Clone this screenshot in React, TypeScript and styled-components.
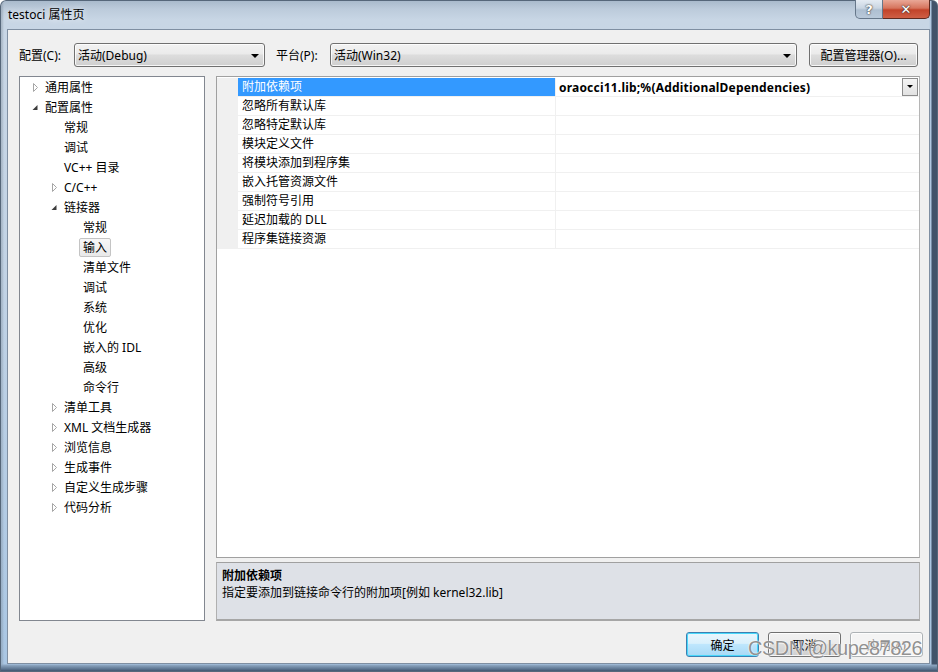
import React from "react";
import styled, { createGlobalStyle } from "styled-components";

const GlobalStyle = createGlobalStyle`
  html, body {
    margin: 0;
    padding: 0;
    background: #ffffff;
  }
  body {
    font-family: "Noto Sans", "Noto Sans CJK SC", sans-serif;
    font-size: 12px;
    color: #000;
  }
`;

const Window = styled.div`
  position: relative;
  width: 938px;
  height: 672px;
  box-sizing: border-box;
  padding: 0 8px 8px 7px;
  display: flex;
  flex-direction: column;
  border-radius: 6px 6px 0 0;
  overflow: hidden;
  box-shadow: inset 0 0 0 1px #56677a;
  background:
    linear-gradient(0deg, #33465e 0px, #5d7591 3px, #8ea7c2 7px, transparent 8px),
    linear-gradient(90deg, rgba(120, 135, 150, 0.35) 2px, transparent 4px),
    linear-gradient(270deg, #41536a 6px, #a9c3de 7px, transparent 9px),
    linear-gradient(180deg, #a7b8ca 0px, #bccbdb 9px, #c8d6e5 20px, #c2d3e5 40%, #a9c6e3 100%);
`;

const TitleBar = styled.div`
  height: 29px;
  flex: none;
  display: flex;
  justify-content: space-between;
  align-items: flex-start;
`;

const Title = styled.div`
  padding: 7px 0 0 1px;
  line-height: 16px;
  color: #000;
  text-shadow: 0 0 6px rgba(255, 255, 255, 0.9);
`;

const CaptionButtons = styled.div`
  display: flex;
`;

const CaptionButton = styled.div<{ close?: boolean }>`
  width: ${(p) => (p.close ? 47 : 28)}px;
  height: 19px;
  box-sizing: border-box;
  display: flex;
  align-items: center;
  justify-content: center;
  font-family: "DejaVu Sans", sans-serif;
  font-weight: bold;
  font-size: 13px;
  color: #fff;
  border: 1px solid ${(p) => (p.close ? "#5f2a20" : "#66778a")};
  border-top: none;
  border-left: ${(p) => (p.close ? "none" : undefined)};
  border-radius: ${(p) => (p.close ? "0 0 5px 0" : "0 0 0 5px")};
  text-shadow: 0 0 1px #333, 0 0 2px #333;
  background: ${(p) =>
    p.close
      ? "linear-gradient(180deg, #e9a897 0%, #d6745d 45%, #c2432a 55%, #cf5f45 100%)"
      : "linear-gradient(180deg, #e4ebf3 0%, #c9d5e2 45%, #aebfd1 55%, #b9c9da 100%)"};
`;

const Client = styled.div`
  flex: 1;
  display: flex;
  flex-direction: column;
  border: 1px solid #7f8fa2;
  background: #f0f0f0;
  position: relative;
`;

const Toolbar = styled.div`
  margin-top: 13px;
  height: 24px;
  padding-left: 11px;
  display: flex;
  align-items: center;
`;

const Label = styled.span<{ w: number; ml?: number }>`
  width: ${(p) => p.w}px;
  margin-left: ${(p) => p.ml || 0}px;
  flex: none;
  white-space: nowrap;
`;

const buttonFace = `
  background: linear-gradient(180deg, #f2f2f2 0%, #ebebeb 45%, #dddddd 50%, #cfcfcf 100%);
  border: 1px solid #707070;
  border-radius: 3px;
  box-shadow: inset 0 0 0 1px rgba(255, 255, 255, 0.8);
`;

const Combo = styled.div<{ w: number }>`
  ${buttonFace}
  width: ${(p) => p.w}px;
  height: 24px;
  box-sizing: border-box;
  flex: none;
  display: flex;
  align-items: center;
  justify-content: space-between;
  padding: 0 5px 0 3px;
`;

const Arrow = styled.span`
  width: 0;
  height: 0;
  border-left: 4px solid transparent;
  border-right: 4px solid transparent;
  border-top: 4px solid #000;
  margin-top: 2px;
`;

const PushButton = styled.div<{ w: number; ml?: number }>`
  ${buttonFace}
  width: ${(p) => p.w}px;
  margin-left: ${(p) => p.ml || 0}px;
  height: 24px;
  box-sizing: border-box;
  flex: none;
  display: flex;
  align-items: center;
  justify-content: center;
  white-space: nowrap;
`;

const Main = styled.div`
  margin-top: 9px;
  height: 545px;
  padding-left: 11px;
  display: flex;
  gap: 11px;
`;

const TreePanel = styled.div`
  width: 186px;
  box-sizing: border-box;
  border: 1px solid #828790;
  background: #fff;
`;

const TreeRow = styled.div<{ level: number }>`
  height: 20px;
  display: flex;
  align-items: center;
  padding-left: ${(p) => 11 + p.level * 19}px;
`;

const ExpanderBox = styled.span`
  width: 14px;
  height: 20px;
  flex: none;
  display: flex;
  align-items: center;
`;

const TreeLabel = styled.span<{ selected?: boolean }>`
  height: 19px;
  line-height: 17px;
  box-sizing: border-box;
  margin-left: -4px;
  padding: 0 3px;
  white-space: nowrap;
  border: 1px solid ${(p) => (p.selected ? "#c4c4c4" : "transparent")};
  border-radius: 2px;
  background: ${(p) =>
    p.selected ? "linear-gradient(180deg, #f7f7f7 0%, #e9e9e9 100%)" : "transparent"};
`;

const GridColumn = styled.div`
  width: 704px;
  display: flex;
  flex-direction: column;
  gap: 4px;
`;

const Grid = styled.div`
  flex: 1;
  border: 1px solid #a0a0a0;
  border-right-color: #b5b5b5;
  background: #fff;
  padding-top: 1px;
`;

const PropRow = styled.div`
  display: grid;
  grid-template-columns: 21px 318px 1fr;
  height: 19px;
  box-sizing: border-box;
  border-bottom: 1px solid #f0f0f0;
`;

const Gutter = styled.div`
  background: #f0f0f0;
  margin-bottom: -1px;
`;

const NameCell = styled.div<{ selected?: boolean }>`
  padding-left: 4px;
  line-height: 18px;
  white-space: nowrap;
  border-right: 1px solid #f0f0f0;
  background: ${(p) => (p.selected ? "#3399ff" : "transparent")};
  color: ${(p) => (p.selected ? "#fff" : "#000")};
`;

const ValueCell = styled.div`
  padding-left: 3px;
  display: flex;
  align-items: center;
  justify-content: space-between;
  font-weight: bold;
  letter-spacing: 0.2px;
  white-space: nowrap;
`;

const DropButton = styled.span`
  width: 16px;
  height: 18px;
  box-sizing: border-box;
  margin: -1px 1px 0 0;
  border: 1px solid #8c8c8c;
  background: linear-gradient(180deg, #f4f4f4 0%, #e2e2e2 100%);
  display: flex;
  align-items: center;
  justify-content: center;
`;

const SmallArrow = styled.span`
  width: 0;
  height: 0;
  border-left: 3px solid transparent;
  border-right: 3px solid transparent;
  border-top: 3px solid #000;
`;

const Description = styled.div`
  height: 59px;
  box-sizing: border-box;
  border: 1px solid #b0b0b0;
  border-top-color: #a0a0a0;
  border-bottom: 2px solid #a6a6a6;
  background: #dee1e7;
  padding: 4px 0 0 5px;
  line-height: 17px;
`;

const DescTitle = styled.div`
  font-weight: bold;
`;

const ButtonBar = styled.div`
  margin-top: 11px;
  height: 25px;
  padding-right: 6px;
  display: flex;
  justify-content: flex-end;
  gap: 9px;
`;

const DialogButton = styled.div<{ variant?: "default" | "disabled" }>`
  width: 73px;
  height: 25px;
  box-sizing: border-box;
  display: flex;
  align-items: center;
  justify-content: center;
  border-radius: 3px;
  border: 1px solid
    ${(p) =>
      p.variant === "default" ? "#3c7fb1" : p.variant === "disabled" ? "#adb2b5" : "#707070"};
  color: ${(p) => (p.variant === "disabled" ? "#838383" : "#000")};
  box-shadow: inset 0 0 0 1px
    ${(p) => (p.variant === "default" ? "#48d8fb" : "rgba(255,255,255,0.8)")};
  background: ${(p) =>
    p.variant === "default"
      ? "linear-gradient(180deg, #eaf6fd 0%, #d9f0fc 45%, #bee6fd 50%, #a7d9f5 100%)"
      : p.variant === "disabled"
      ? "#f4f4f4"
      : "linear-gradient(180deg, #f2f2f2 0%, #ebebeb 45%, #dddddd 50%, #cfcfcf 100%)"};
`;

const Watermark = styled.div`
  position: absolute;
  left: 748px;
  top: 637px;
  font-family: "Liberation Sans", Arial, sans-serif;
  font-size: 20px;
  letter-spacing: -0.5px;
  color: rgba(115, 115, 115, 0.8);
  text-shadow: 0 0 1px #fff, 0 0 2px rgba(255, 255, 255, 0.9);
  pointer-events: none;
  white-space: nowrap;
`;

function Expander({ state }: { state?: "open" | "closed" }) {
  if (!state) return <ExpanderBox />;
  return (
    <ExpanderBox>
      <svg width="9" height="9" viewBox="0 0 9 9">
        {state === "closed" ? (
          <path d="M2.5 0.5 L6.5 4.5 L2.5 8.5 Z" fill="#fff" stroke="#a6a6a6" />
        ) : (
          <path d="M6.5 2 L6.5 7 L1.5 7 Z" fill="#3c3c3c" />
        )}
      </svg>
    </ExpanderBox>
  );
}

type TreeItem = {
  label: string;
  level: number;
  state?: "open" | "closed";
  selected?: boolean;
};

const treeItems: TreeItem[] = [
  { label: "通用属性", level: 0, state: "closed" },
  { label: "配置属性", level: 0, state: "open" },
  { label: "常规", level: 1 },
  { label: "调试", level: 1 },
  { label: "VC++ 目录", level: 1 },
  { label: "C/C++", level: 1, state: "closed" },
  { label: "链接器", level: 1, state: "open" },
  { label: "常规", level: 2 },
  { label: "输入", level: 2, selected: true },
  { label: "清单文件", level: 2 },
  { label: "调试", level: 2 },
  { label: "系统", level: 2 },
  { label: "优化", level: 2 },
  { label: "嵌入的 IDL", level: 2 },
  { label: "高级", level: 2 },
  { label: "命令行", level: 2 },
  { label: "清单工具", level: 1, state: "closed" },
  { label: "XML 文档生成器", level: 1, state: "closed" },
  { label: "浏览信息", level: 1, state: "closed" },
  { label: "生成事件", level: 1, state: "closed" },
  { label: "自定义生成步骤", level: 1, state: "closed" },
  { label: "代码分析", level: 1, state: "closed" },
];

const properties = [
  "附加依赖项",
  "忽略所有默认库",
  "忽略特定默认库",
  "模块定义文件",
  "将模块添加到程序集",
  "嵌入托管资源文件",
  "强制符号引用",
  "延迟加载的 DLL",
  "程序集链接资源",
];

export default function App() {
  return (
    <>
      <GlobalStyle />
      <Window>
        <TitleBar>
          <Title>testoci 属性页</Title>
          <CaptionButtons>
            <CaptionButton>?</CaptionButton>
            <CaptionButton close>✕</CaptionButton>
          </CaptionButtons>
        </TitleBar>
        <Client>
          <Toolbar>
            <Label w={55}>配置(C):</Label>
            <Combo w={191}>
              <span>活动(Debug)</span>
              <Arrow />
            </Combo>
            <Label w={54} ml={11}>
              平台(P):
            </Label>
            <Combo w={467}>
              <span>活动(Win32)</span>
              <Arrow />
            </Combo>
            <PushButton w={109} ml={12}>
              配置管理器(O)...
            </PushButton>
          </Toolbar>
          <Main>
            <TreePanel>
              {treeItems.map((item, i) => (
                <TreeRow key={i} level={item.level}>
                  <Expander state={item.state} />
                  <TreeLabel selected={item.selected}>{item.label}</TreeLabel>
                </TreeRow>
              ))}
            </TreePanel>
            <GridColumn>
              <Grid>
                {properties.map((name, i) => (
                  <PropRow key={name}>
                    <Gutter />
                    <NameCell selected={i === 0}>{name}</NameCell>
                    <ValueCell>
                      {i === 0 && (
                        <>
                          <span>oraocci11.lib;%(AdditionalDependencies)</span>
                          <DropButton>
                            <SmallArrow />
                          </DropButton>
                        </>
                      )}
                    </ValueCell>
                  </PropRow>
                ))}
              </Grid>
              <Description>
                <DescTitle>附加依赖项</DescTitle>
                <div>指定要添加到链接命令行的附加项[例如 kernel32.lib]</div>
              </Description>
            </GridColumn>
          </Main>
          <ButtonBar>
            <DialogButton variant="default">确定</DialogButton>
            <DialogButton>取消</DialogButton>
            <DialogButton variant="disabled">应用(A)</DialogButton>
          </ButtonBar>
        </Client>
        <Watermark>CSDN @kupe87826</Watermark>
      </Window>
    </>
  );
}
